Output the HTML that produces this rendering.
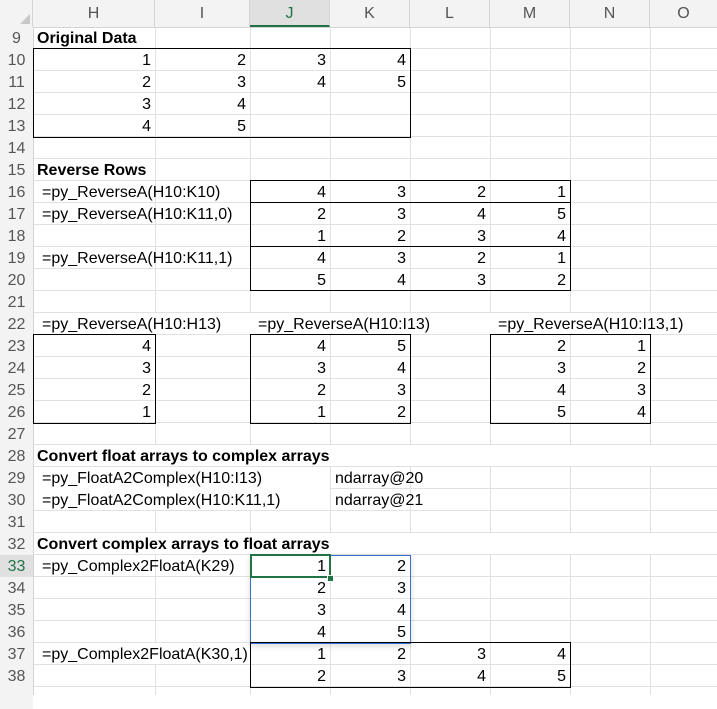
<!DOCTYPE html>
<html><head><meta charset="utf-8"><style>
body{margin:0;width:717px;height:695px;overflow:hidden;background:#fff;font-family:"Liberation Sans",Arial,sans-serif;position:relative}
.a{position:absolute}
.t{position:absolute;font-size:16px;line-height:23px;height:22px;color:#000;white-space:nowrap}
.r{text-align:right}
.b{font-weight:bold}
.v{position:absolute;top:0;width:1px;height:695px;background:#e1e1e1}
.hd{position:absolute;top:0;height:27px;line-height:27px;text-align:center;font-size:16px;color:#555;background:#f3f3f3;border-right:1px solid #d4d4d4;box-sizing:border-box}
.rn{position:absolute;left:0;width:33px;height:22px;line-height:23px;text-align:center;font-size:16px;color:#555;background:#f3f3f3}
.box{position:absolute;border:1px solid #000;box-sizing:border-box}
</style></head><body>
<div class="v" style="left:155px"></div><div class="v" style="left:250px"></div><div class="v" style="left:330px"></div><div class="v" style="left:410px"></div><div class="v" style="left:490px"></div><div class="v" style="left:570px"></div><div class="v" style="left:650px"></div>
<div class="a" style="left:0;top:27px;width:717px;height:668px;background:repeating-linear-gradient(to bottom,transparent 0,transparent 21px,#e1e1e1 21px,#e1e1e1 22px)"></div>
<div class="hd" style="left:0;width:33px;background:#f3f3f3"></div>
<div class="hd" style="left:33px;width:122px">H</div>
<div class="hd" style="left:155px;width:95px">I</div>
<div class="hd" style="left:250px;width:80px;background:#e0e0e0;color:#217346;border-bottom:2px solid #217346">J</div>
<div class="hd" style="left:330px;width:80px">K</div>
<div class="hd" style="left:410px;width:80px">L</div>
<div class="hd" style="left:490px;width:80px">M</div>
<div class="hd" style="left:570px;width:80px">N</div>
<div class="hd" style="left:650px;width:67px;border-right:none">O</div>
<div class="a" style="left:0;top:27px;width:717px;height:1px;background:#d4d4d4"></div>
<div class="a" style="left:33px;top:27px;width:1px;height:668px;background:#d4d4d4"></div>
<div class="rn" style="top:27px">9</div><div class="rn" style="top:49px">10</div><div class="rn" style="top:71px">11</div><div class="rn" style="top:93px">12</div><div class="rn" style="top:115px">13</div><div class="rn" style="top:137px">14</div><div class="rn" style="top:159px">15</div><div class="rn" style="top:181px">16</div><div class="rn" style="top:203px">17</div><div class="rn" style="top:225px">18</div><div class="rn" style="top:247px">19</div><div class="rn" style="top:269px">20</div><div class="rn" style="top:291px">21</div><div class="rn" style="top:313px">22</div><div class="rn" style="top:335px">23</div><div class="rn" style="top:357px">24</div><div class="rn" style="top:379px">25</div><div class="rn" style="top:401px">26</div><div class="rn" style="top:423px">27</div><div class="rn" style="top:445px">28</div><div class="rn" style="top:467px">29</div><div class="rn" style="top:489px">30</div><div class="rn" style="top:511px">31</div><div class="rn" style="top:533px">32</div><div class="rn" style="top:555px;background:#e0e0e0;color:#217346">33</div><div class="rn" style="top:577px">34</div><div class="rn" style="top:599px">35</div><div class="rn" style="top:621px">36</div><div class="rn" style="top:643px">37</div><div class="rn" style="top:665px">38</div><div class="rn" style="top:687px"></div>
<div class="a" style="width:0;height:0;border-left:10px solid transparent;border-bottom:10px solid #c8c8c8;left:20px;top:14px"></div>

<div class="t b" style="left:37px;top:27px">Original Data</div>
<div class="box" style="left:33px;top:48px;width:378px;height:90px"></div>
<div class="t r" style="left:33px;width:118px;top:49px">1</div><div class="t r" style="left:155px;width:91px;top:49px">2</div><div class="t r" style="left:250px;width:76px;top:49px">3</div><div class="t r" style="left:330px;width:76px;top:49px">4</div>
<div class="t r" style="left:33px;width:118px;top:71px">2</div><div class="t r" style="left:155px;width:91px;top:71px">3</div><div class="t r" style="left:250px;width:76px;top:71px">4</div><div class="t r" style="left:330px;width:76px;top:71px">5</div>
<div class="t r" style="left:33px;width:118px;top:93px">3</div><div class="t r" style="left:155px;width:91px;top:93px">4</div>
<div class="t r" style="left:33px;width:118px;top:115px">4</div><div class="t r" style="left:155px;width:91px;top:115px">5</div>

<div class="t b" style="left:37px;top:159px">Reverse Rows</div>
<div class="t" style="left:42px;top:181px">=py_ReverseA(H10:K10)</div>
<div class="t" style="left:42px;top:203px">=py_ReverseA(H10:K11,0)</div>
<div class="t" style="left:42px;top:247px">=py_ReverseA(H10:K11,1)</div>
<div class="box" style="left:250px;top:180px;width:321px;height:23px"></div>
<div class="box" style="left:250px;top:202px;width:321px;height:45px"></div>
<div class="box" style="left:250px;top:246px;width:321px;height:45px"></div>
<div class="t r" style="left:250px;width:76px;top:181px">4</div><div class="t r" style="left:330px;width:76px;top:181px">3</div><div class="t r" style="left:410px;width:76px;top:181px">2</div><div class="t r" style="left:490px;width:76px;top:181px">1</div>
<div class="t r" style="left:250px;width:76px;top:203px">2</div><div class="t r" style="left:330px;width:76px;top:203px">3</div><div class="t r" style="left:410px;width:76px;top:203px">4</div><div class="t r" style="left:490px;width:76px;top:203px">5</div>
<div class="t r" style="left:250px;width:76px;top:225px">1</div><div class="t r" style="left:330px;width:76px;top:225px">2</div><div class="t r" style="left:410px;width:76px;top:225px">3</div><div class="t r" style="left:490px;width:76px;top:225px">4</div>
<div class="t r" style="left:250px;width:76px;top:247px">4</div><div class="t r" style="left:330px;width:76px;top:247px">3</div><div class="t r" style="left:410px;width:76px;top:247px">2</div><div class="t r" style="left:490px;width:76px;top:247px">1</div>
<div class="t r" style="left:250px;width:76px;top:269px">5</div><div class="t r" style="left:330px;width:76px;top:269px">4</div><div class="t r" style="left:410px;width:76px;top:269px">3</div><div class="t r" style="left:490px;width:76px;top:269px">2</div>

<div class="a" style="left:34px;top:313px;width:683px;height:21px;background:#fff"></div>
<div class="t" style="left:42px;top:313px">=py_ReverseA(H10:H13)</div>
<div class="t" style="left:258px;top:313px">=py_ReverseA(H10:I13)</div>
<div class="t" style="left:498px;top:313px">=py_ReverseA(H10:I13,1)</div>
<div class="box" style="left:33px;top:334px;width:123px;height:90px"></div>
<div class="box" style="left:250px;top:334px;width:161px;height:90px"></div>
<div class="box" style="left:490px;top:334px;width:161px;height:90px"></div>
<div class="t r" style="left:33px;width:118px;top:335px">4</div><div class="t r" style="left:33px;width:118px;top:357px">3</div><div class="t r" style="left:33px;width:118px;top:379px">2</div><div class="t r" style="left:33px;width:118px;top:401px">1</div>
<div class="t r" style="left:250px;width:76px;top:335px">4</div><div class="t r" style="left:330px;width:76px;top:335px">5</div>
<div class="t r" style="left:250px;width:76px;top:357px">3</div><div class="t r" style="left:330px;width:76px;top:357px">4</div>
<div class="t r" style="left:250px;width:76px;top:379px">2</div><div class="t r" style="left:330px;width:76px;top:379px">3</div>
<div class="t r" style="left:250px;width:76px;top:401px">1</div><div class="t r" style="left:330px;width:76px;top:401px">2</div>
<div class="t r" style="left:490px;width:76px;top:335px">2</div><div class="t r" style="left:570px;width:76px;top:335px">1</div>
<div class="t r" style="left:490px;width:76px;top:357px">3</div><div class="t r" style="left:570px;width:76px;top:357px">2</div>
<div class="t r" style="left:490px;width:76px;top:379px">4</div><div class="t r" style="left:570px;width:76px;top:379px">3</div>
<div class="t r" style="left:490px;width:76px;top:401px">5</div><div class="t r" style="left:570px;width:76px;top:401px">4</div>

<div class="a" style="left:34px;top:445px;width:683px;height:21px;background:#fff"></div>
<div class="t b" style="left:37px;top:445px">Convert float arrays to complex arrays</div>
<div class="a" style="left:34px;top:467px;width:296px;height:43px;background:#fff"></div>
<div class="t" style="left:42px;top:467px">=py_FloatA2Complex(H10:I13)</div>
<div class="t" style="left:42px;top:489px">=py_FloatA2Complex(H10:K11,1)</div>
<div class="t" style="left:335px;top:467px">ndarray@20</div>
<div class="t" style="left:335px;top:489px">ndarray@21</div>

<div class="a" style="left:34px;top:533px;width:683px;height:21px;background:#fff"></div>
<div class="t b" style="left:37px;top:533px">Convert complex arrays to float arrays</div>
<div class="t" style="left:42px;top:555px">=py_Complex2FloatA(K29)</div>
<div class="a" style="left:34px;top:643px;width:215px;height:21px;background:#fff"></div>
<div class="t" style="left:42px;top:643px">=py_Complex2FloatA(K30,1)</div>
<div class="a" style="left:250px;top:555px;width:161px;height:89px;border:1px solid #3a6fd0;box-sizing:border-box;box-shadow:0 2px 6px rgba(0,0,0,0.15)"></div>
<div class="a" style="left:250px;top:554px;width:81px;height:24px;border:2px solid #217346;box-sizing:border-box"></div>
<div class="a" style="left:327px;top:575px;width:5px;height:5px;background:#217346;border:1px solid #fff"></div>
<div class="t r" style="left:250px;width:76px;top:555px">1</div><div class="t r" style="left:330px;width:76px;top:555px">2</div>
<div class="t r" style="left:250px;width:76px;top:577px">2</div><div class="t r" style="left:330px;width:76px;top:577px">3</div>
<div class="t r" style="left:250px;width:76px;top:599px">3</div><div class="t r" style="left:330px;width:76px;top:599px">4</div>
<div class="t r" style="left:250px;width:76px;top:621px">4</div><div class="t r" style="left:330px;width:76px;top:621px">5</div>
<div class="box" style="left:250px;top:642px;width:321px;height:46px"></div>
<div class="t r" style="left:250px;width:76px;top:643px">1</div><div class="t r" style="left:330px;width:76px;top:643px">2</div><div class="t r" style="left:410px;width:76px;top:643px">3</div><div class="t r" style="left:490px;width:76px;top:643px">4</div>
<div class="t r" style="left:250px;width:76px;top:665px">2</div><div class="t r" style="left:330px;width:76px;top:665px">3</div><div class="t r" style="left:410px;width:76px;top:665px">4</div><div class="t r" style="left:490px;width:76px;top:665px">5</div>
</body></html>
